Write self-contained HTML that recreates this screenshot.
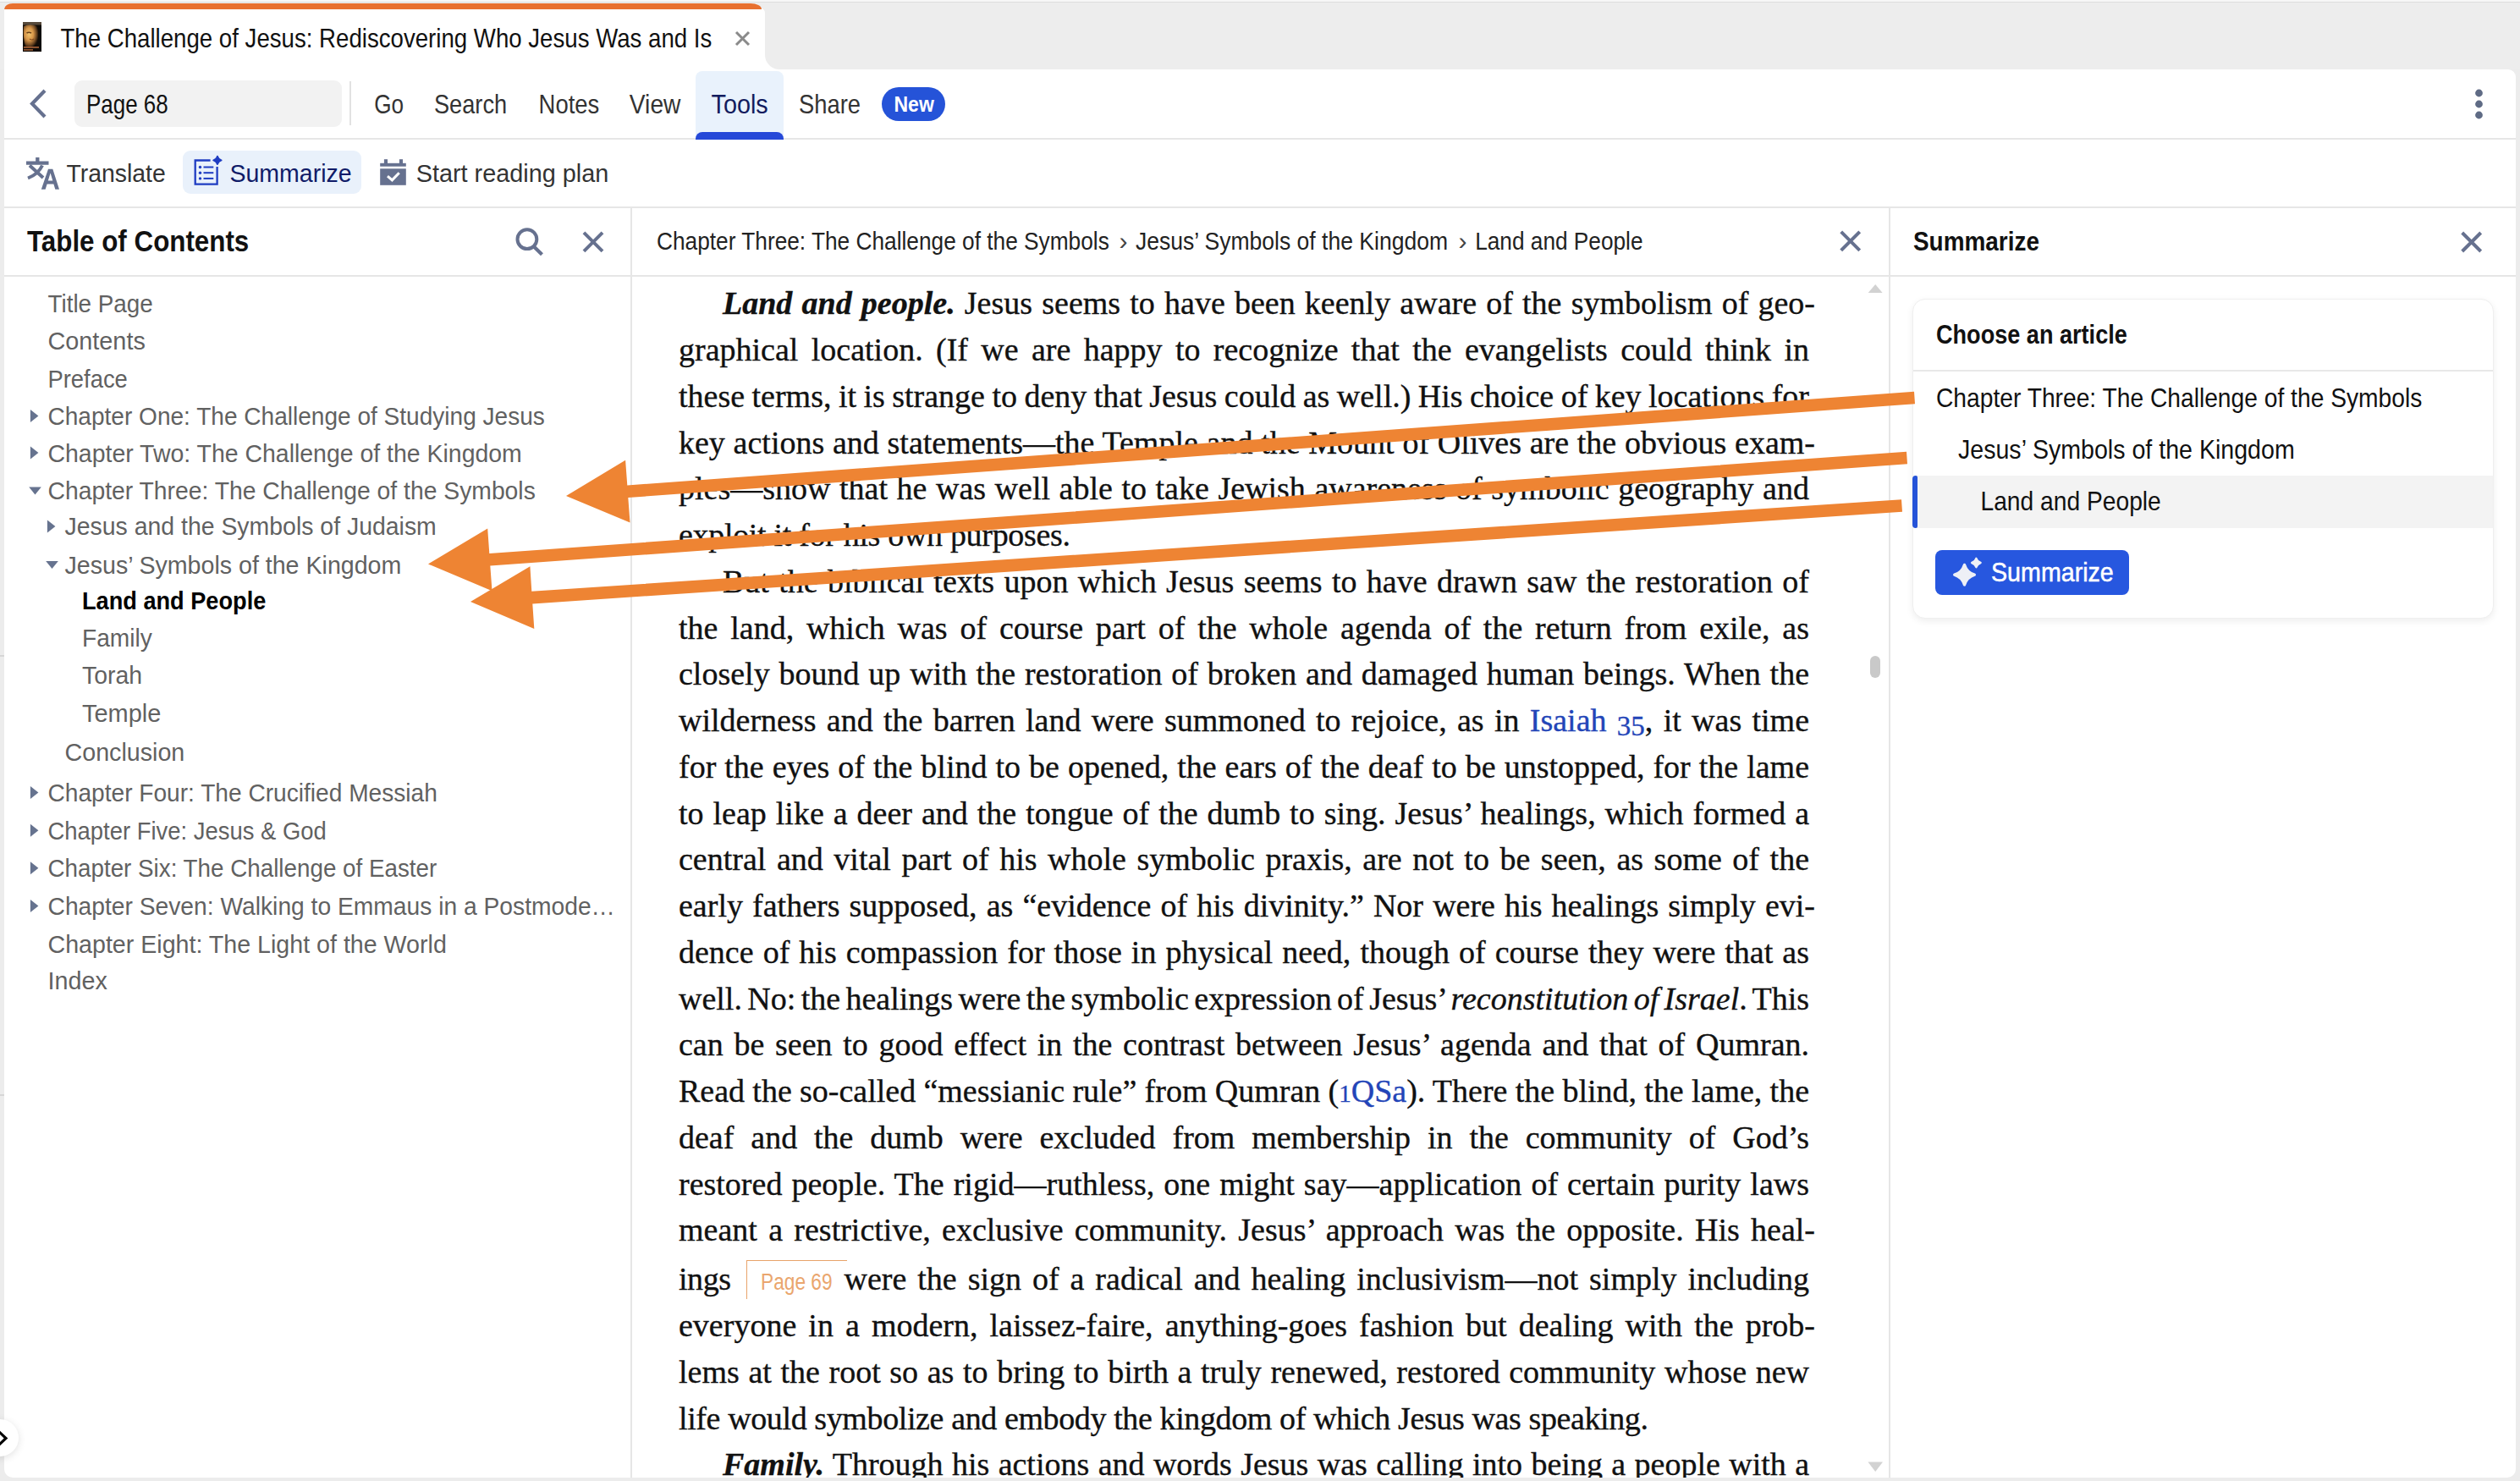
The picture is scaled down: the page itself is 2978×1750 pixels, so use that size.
<!DOCTYPE html>
<html><head><meta charset="utf-8"><title>The Challenge of Jesus</title>
<style>
html,body{margin:0;padding:0;}
body{width:2978px;height:1750px;position:relative;overflow:hidden;background:#ececec;font-family:"Liberation Sans",sans-serif;}
.a{position:absolute;}
</style></head><body>
<div class="a" style="left:0px;top:0px;width:2978px;height:3px;background:#f7f7f7;"></div><div class="a" style="left:0px;top:2px;width:2978px;height:1px;background:#dedede;"></div><div class="a" style="left:0px;top:3px;width:2978px;height:79px;background:#ededed;"></div><div class="a" style="left:5px;top:82px;width:2968px;height:1664px;background:#ffffff;border-radius:0 9px 10px 10px;"></div><div class="a" style="left:900px;top:60px;width:30px;height:22px;background:#ffffff;"></div><div class="a" style="left:904px;top:3px;width:2074px;height:79px;background:#ededed;border-bottom-left-radius:17px;"></div><div class="a" style="left:5px;top:10px;width:899px;height:72px;background:#ffffff;border-top-right-radius:5px;"></div><div class="a" style="left:5px;top:4px;width:895px;height:7px;background:#e8702f;border-top-left-radius:10px 7px;border-top-right-radius:13px 7px;"></div><div class="a" style="left:88px;top:95px;width:316px;height:55px;background:#f2f2f2;border-radius:9px;"></div><div class="a" style="left:413px;top:96px;width:2px;height:52px;background:#e2e2e2;"></div><div class="a" style="left:822px;top:84px;width:104px;height:81px;background:#e9f2fc;border-radius:8px 8px 0 0;"></div><div class="a" style="left:5px;top:163px;width:2968px;height:2px;background:#e6e6e6;"></div><div class="a" style="left:822px;top:156px;width:104px;height:9px;background:#2548d8;border-radius:8px 8px 0 0;"></div><div class="a" style="left:1042px;top:103px;width:75px;height:40px;background:#2553d8;border-radius:20px;"></div><div class="a" style="left:216px;top:178px;width:211px;height:51px;background:#e9f1fb;border-radius:9px;"></div><div class="a" style="left:5px;top:244px;width:2968px;height:2px;background:#e6e6e6;"></div><div class="a" style="left:745px;top:246px;width:2px;height:1500px;background:#e6e6e6;"></div><div class="a" style="left:2232px;top:246px;width:2px;height:1500px;background:#e6e6e6;"></div><div class="a" style="left:5px;top:325px;width:2968px;height:2px;background:#e6e6e6;"></div><div class="a" style="left:2260px;top:353px;width:687px;height:378px;background:#ffffff;border-radius:15px;border:1px solid #efefef;box-sizing:border-box;box-shadow:0 3px 8px rgba(0,0,0,0.07);"></div><div class="a" style="left:2261px;top:437px;width:685px;height:2px;background:#e8e8e8;"></div><div class="a" style="left:2261px;top:562px;width:685px;height:62px;background:#f3f3f3;"></div><div class="a" style="left:2260px;top:562px;width:6px;height:62px;background:#2553d8;border-radius:6px 3px 3px 6px;"></div><div class="a" style="left:2287px;top:650px;width:229px;height:53px;background:#2757df;border-radius:8px;"></div><div class="a" style="left:2210px;top:775px;width:12px;height:26px;background:#c9c9c9;border-radius:6px;"></div><div class="a" style="left:882px;top:1489px;width:1px;height:46px;background:#e8a36a;"></div><div class="a" style="left:882px;top:1489px;width:119px;height:1px;background:#e8a36a;"></div><div class="a" style="left:0px;top:774px;width:5px;height:2px;background:#d6d6d6;"></div><div class="a" style="left:0px;top:1293px;width:5px;height:2px;background:#d6d6d6;"></div><div class="a" style="left:-22px;top:1677px;width:44px;height:44px;background:#ffffff;border-radius:22px;box-shadow:0 2px 10px rgba(0,0,0,0.12);"></div>
<svg class="a" style="left:0;top:0" width="2978" height="1750" viewBox="0 0 2978 1750"><defs><clipPath id="cw"><rect x="5" y="82" width="2968" height="1664"/></clipPath></defs><defs><radialGradient id="fg" cx="0.38" cy="0.42" r="0.62"><stop offset="0" stop-color="#f2c46e"/><stop offset="0.45" stop-color="#d69548"/><stop offset="0.8" stop-color="#6a4420"/><stop offset="1" stop-color="#1a1008"/></radialGradient></defs><rect x="27" y="26" width="22" height="35" fill="#0f0b07"/><path d="M28 31Q36 27 44 31Q47 41 44 51Q38 58 30 55Q27 44 28 31Z" fill="url(#fg)"/><rect x="27" y="26" width="22" height="3.5" fill="#5e5040" opacity="0.9"/><path d="M31.5 39Q34 37.5 37 39" stroke="#6a4018" stroke-width="1.6" fill="none"/><path d="M35 46Q38 48 40 46" stroke="#8a5020" stroke-width="1.2" fill="none"/><rect x="28" y="55" width="18" height="1.8" fill="#c07040" opacity="0.8"/><rect x="28" y="58" width="11" height="1.8" fill="#c07040" opacity="0.7"/><path d="M870 38L885 53M885 38L870 53" stroke="#8a8a8a" stroke-width="3"/><path d="M53 107L38 122.6L53 138" fill="none" stroke="#66718f" stroke-width="4.2"/><circle cx="2929.5" cy="110" r="4.4" fill="#5f6b85"/><circle cx="2929.5" cy="123" r="4.4" fill="#5f6b85"/><circle cx="2929.5" cy="136" r="4.4" fill="#5f6b85"/><path d="M31 192.7H57.5M44.3 186V192.7" stroke="#66718f" stroke-width="4.3" fill="none"/><path d="M35 195.5L51 210M50 195.5Q45 206 33 210.5" stroke="#66718f" stroke-width="4" fill="none"/><path d="M48.8 223.8L57 199.7H62.3L70 223.8H65.3L63.4 217.4H55.6L53.6 223.8ZM56.8 213.6H62.3L59.6 204.5Z" fill="#66718f"/><path d="M248.6 189.5H230.7V217.7H256.6V197" fill="none" stroke="#1f3dc2" stroke-width="2.3"/><circle cx="236.5" cy="197.5" r="1.7" fill="#1f3dc2"/><path d="M240.5 197.5H252.3" stroke="#1f3dc2" stroke-width="2"/><circle cx="236.5" cy="204.2" r="1.7" fill="#1f3dc2"/><path d="M240.5 204.2H252.3" stroke="#1f3dc2" stroke-width="2"/><circle cx="236.5" cy="210.9" r="1.7" fill="#1f3dc2"/><path d="M240.5 210.9H252.3" stroke="#1f3dc2" stroke-width="2"/><path d="M256.9 184.8Q258.00399999999996 188.296 261.5 189.4Q258.00399999999996 190.50400000000002 256.9 194.0Q255.79599999999996 190.50400000000002 252.29999999999998 189.4Q255.79599999999996 188.296 256.9 184.8Z" fill="#1f3dc2" stroke="#1f3dc2" stroke-width="2" stroke-linejoin="round"/><rect x="453.9" y="188.2" width="4.1" height="5" fill="#66718f"/><rect x="471.9" y="188.2" width="4.1" height="5" fill="#66718f"/><rect x="449.2" y="192.8" width="30.6" height="3.9" fill="#66718f"/><rect x="449.2" y="199.3" width="30.6" height="19.5" fill="#66718f"/><path d="M458 208.2L463.4 212.9L471.7 204.2" fill="none" stroke="#fff" stroke-width="3"/><circle cx="622.9" cy="282.7" r="11.4" fill="none" stroke="#66718f" stroke-width="4"/><path d="M631 291.5L640.5 300.8" stroke="#66718f" stroke-width="4.2"/><path d="M690 274.8L712 296.8M712 274.8L690 296.8" stroke="#66718f" stroke-width="4"/><path d="M2175.7 273.9L2197.7 295.9M2197.7 273.9L2175.7 295.9" stroke="#66718f" stroke-width="4"/><path d="M2909.7 275L2931.7 297M2931.7 275L2909.7 297" stroke="#66718f" stroke-width="4"/><path d="M2207.7 346L2216.2 336L2224.6 346Z" fill="#d2d2d2"/><path d="M2207.5 1727.6L2225 1727.6L2216.2 1739Z" fill="#d2d2d2"/><path d="M2321.5 667.4000000000001Q2324.332 676.368 2333.3 679.2Q2324.332 682.032 2321.5 691.0Q2318.668 682.032 2309.7 679.2Q2318.668 676.368 2321.5 667.4000000000001Z" fill="#eef0f6" stroke="#eef0f6" stroke-width="3.4" stroke-linejoin="round"/><path d="M2335.4 659.8Q2336.648 663.752 2340.6 665Q2336.648 666.248 2335.4 670.2Q2334.152 666.248 2330.2000000000003 665Q2334.152 663.752 2335.4 659.8Z" fill="#eef0f6" stroke="#eef0f6" stroke-width="2.4" stroke-linejoin="round"/><path d="M-2 1691L7 1699.5L-2 1708" fill="none" stroke="#000" stroke-width="3.2"/><path d="M35.9 484.0L45.4 491.5L35.9 499.0Z" fill="#66738f"/><path d="M35.9 527.5L45.4 535.0L35.9 542.5Z" fill="#66738f"/><path d="M34.2 575.6L48.8 575.6L41.5 584.6Z" fill="#66738f"/><path d="M55.9 614.4L65.4 621.9L55.9 629.4Z" fill="#66738f"/><path d="M54.2 663.1L68.8 663.1L61.5 672.1Z" fill="#66738f"/><path d="M35.9 929.0L45.4 936.5L35.9 944.0Z" fill="#66738f"/><path d="M35.9 973.7L45.4 981.2L35.9 988.7Z" fill="#66738f"/><path d="M35.9 1018.3L45.4 1025.8L35.9 1033.3Z" fill="#66738f"/><path d="M35.9 1063.0L45.4 1070.5L35.9 1078.0Z" fill="#66738f"/><text id="t0" x="71.5" y="55.5" fill="#111" style="font-family:'Liberation Sans', sans-serif;font-size:32px;font-weight:400;font-style:normal;"  textLength="769.8" lengthAdjust="spacingAndGlyphs">The Challenge of Jesus: Rediscovering Who Jesus Was and Is</text><text id="t1" x="102" y="134" fill="#111" style="font-family:'Liberation Sans', sans-serif;font-size:30.5px;font-weight:400;font-style:normal;"  textLength="96.7" lengthAdjust="spacingAndGlyphs">Page 68</text><text id="t2" x="442.3" y="133.6" fill="#333" style="font-family:'Liberation Sans', sans-serif;font-size:30.5px;font-weight:400;font-style:normal;"  textLength="34.8" lengthAdjust="spacingAndGlyphs">Go</text><text id="t3" x="513" y="133.6" fill="#333" style="font-family:'Liberation Sans', sans-serif;font-size:30.5px;font-weight:400;font-style:normal;"  textLength="86.1" lengthAdjust="spacingAndGlyphs">Search</text><text id="t4" x="636.6" y="133.6" fill="#333" style="font-family:'Liberation Sans', sans-serif;font-size:30.5px;font-weight:400;font-style:normal;"  textLength="71.7" lengthAdjust="spacingAndGlyphs">Notes</text><text id="t5" x="743.8" y="133.6" fill="#333" style="font-family:'Liberation Sans', sans-serif;font-size:30.5px;font-weight:400;font-style:normal;"  textLength="60.7" lengthAdjust="spacingAndGlyphs">View</text><text id="t6" x="840.5" y="133.6" fill="#121c5e" style="font-family:'Liberation Sans', sans-serif;font-size:30.5px;font-weight:400;font-style:normal;"  textLength="67.2" lengthAdjust="spacingAndGlyphs">Tools</text><text id="t7" x="944" y="133.6" fill="#333" style="font-family:'Liberation Sans', sans-serif;font-size:30.5px;font-weight:400;font-style:normal;"  textLength="73.0" lengthAdjust="spacingAndGlyphs">Share</text><text id="t8" x="1056.5" y="132.2" fill="#ffffff" style="font-family:'Liberation Sans', sans-serif;font-size:26px;font-weight:700;font-style:normal;"  textLength="47.3" lengthAdjust="spacingAndGlyphs">New</text><text id="t9" x="78.4" y="215.2" fill="#333" style="font-family:'Liberation Sans', sans-serif;font-size:29.5px;font-weight:400;font-style:normal;"  textLength="117.3" lengthAdjust="spacingAndGlyphs">Translate</text><text id="t10" x="271.4" y="215.2" fill="#101b68" style="font-family:'Liberation Sans', sans-serif;font-size:29.5px;font-weight:400;font-style:normal;"  textLength="144.2" lengthAdjust="spacingAndGlyphs">Summarize</text><text id="t11" x="491.7" y="215.2" fill="#333" style="font-family:'Liberation Sans', sans-serif;font-size:29.5px;font-weight:400;font-style:normal;"  textLength="227.6" lengthAdjust="spacingAndGlyphs">Start reading plan</text><text id="t12" x="32" y="297" fill="#111" style="font-family:'Liberation Sans', sans-serif;font-size:34.5px;font-weight:700;font-style:normal;"  textLength="262.3" lengthAdjust="spacingAndGlyphs">Table of Contents</text><text id="t13" x="776" y="295.4" fill="#222" style="font-family:'Liberation Sans', sans-serif;font-size:30px;font-weight:400;font-style:normal;"  textLength="534.8" lengthAdjust="spacingAndGlyphs">Chapter Three: The Challenge of the Symbols</text><text id="t14" x="1322.5" y="295.4" fill="#444" style="font-family:'Liberation Sans', sans-serif;font-size:30px;font-weight:400;font-style:normal;" >›</text><text id="t15" x="1341.9" y="295.4" fill="#222" style="font-family:'Liberation Sans', sans-serif;font-size:30px;font-weight:400;font-style:normal;"  textLength="369.1" lengthAdjust="spacingAndGlyphs">Jesus’ Symbols of the Kingdom</text><text id="t16" x="1723.5" y="295.4" fill="#444" style="font-family:'Liberation Sans', sans-serif;font-size:30px;font-weight:400;font-style:normal;" >›</text><text id="t17" x="1743.2" y="295.4" fill="#222" style="font-family:'Liberation Sans', sans-serif;font-size:30px;font-weight:400;font-style:normal;"  textLength="198.3" lengthAdjust="spacingAndGlyphs">Land and People</text><text id="t18" x="2261" y="296" fill="#111" style="font-family:'Liberation Sans', sans-serif;font-size:30.5px;font-weight:700;font-style:normal;"  textLength="148.9" lengthAdjust="spacingAndGlyphs">Summarize</text><text id="t19" x="56.5" y="368.6" fill="#616161" style="font-family:'Liberation Sans', sans-serif;font-size:30px;font-weight:400;font-style:normal;"  textLength="124.3" lengthAdjust="spacingAndGlyphs">Title Page</text><text id="t20" x="56.5" y="413" fill="#616161" style="font-family:'Liberation Sans', sans-serif;font-size:30px;font-weight:400;font-style:normal;"  textLength="115.3" lengthAdjust="spacingAndGlyphs">Contents</text><text id="t21" x="56.5" y="457.5" fill="#616161" style="font-family:'Liberation Sans', sans-serif;font-size:30px;font-weight:400;font-style:normal;"  textLength="94.3" lengthAdjust="spacingAndGlyphs">Preface</text><text id="t22" x="56.5" y="502" fill="#616161" style="font-family:'Liberation Sans', sans-serif;font-size:30px;font-weight:400;font-style:normal;"  textLength="587.3" lengthAdjust="spacingAndGlyphs">Chapter One: The Challenge of Studying Jesus</text><text id="t23" x="56.5" y="545.5" fill="#616161" style="font-family:'Liberation Sans', sans-serif;font-size:30px;font-weight:400;font-style:normal;"  textLength="560.3" lengthAdjust="spacingAndGlyphs">Chapter Two: The Challenge of the Kingdom</text><text id="t24" x="56.5" y="590" fill="#616161" style="font-family:'Liberation Sans', sans-serif;font-size:30px;font-weight:400;font-style:normal;"  textLength="576.3" lengthAdjust="spacingAndGlyphs">Chapter Three: The Challenge of the Symbols</text><text id="t25" x="76.5" y="632.4" fill="#616161" style="font-family:'Liberation Sans', sans-serif;font-size:30px;font-weight:400;font-style:normal;"  textLength="439.3" lengthAdjust="spacingAndGlyphs">Jesus and the Symbols of Judaism</text><text id="t26" x="76.5" y="677.5" fill="#616161" style="font-family:'Liberation Sans', sans-serif;font-size:30px;font-weight:400;font-style:normal;"  textLength="397.8" lengthAdjust="spacingAndGlyphs">Jesus’ Symbols of the Kingdom</text><text id="t27" x="97" y="719.7" fill="#000" style="font-family:'Liberation Sans', sans-serif;font-size:30px;font-weight:700;font-style:normal;"  textLength="217.3" lengthAdjust="spacingAndGlyphs">Land and People</text><text id="t28" x="97" y="764.3" fill="#616161" style="font-family:'Liberation Sans', sans-serif;font-size:30px;font-weight:400;font-style:normal;"  textLength="82.8" lengthAdjust="spacingAndGlyphs">Family</text><text id="t29" x="97" y="808.3" fill="#616161" style="font-family:'Liberation Sans', sans-serif;font-size:30px;font-weight:400;font-style:normal;"  textLength="71.0" lengthAdjust="spacingAndGlyphs">Torah</text><text id="t30" x="97" y="853.3" fill="#616161" style="font-family:'Liberation Sans', sans-serif;font-size:30px;font-weight:400;font-style:normal;"  textLength="93.3" lengthAdjust="spacingAndGlyphs">Temple</text><text id="t31" x="76.5" y="899.3" fill="#616161" style="font-family:'Liberation Sans', sans-serif;font-size:30px;font-weight:400;font-style:normal;"  textLength="141.8" lengthAdjust="spacingAndGlyphs">Conclusion</text><text id="t32" x="56.5" y="947" fill="#616161" style="font-family:'Liberation Sans', sans-serif;font-size:30px;font-weight:400;font-style:normal;"  textLength="460.3" lengthAdjust="spacingAndGlyphs">Chapter Four: The Crucified Messiah</text><text id="t33" x="56.5" y="991.7" fill="#616161" style="font-family:'Liberation Sans', sans-serif;font-size:30px;font-weight:400;font-style:normal;"  textLength="329.3" lengthAdjust="spacingAndGlyphs">Chapter Five: Jesus &amp; God</text><text id="t34" x="56.5" y="1036.3" fill="#616161" style="font-family:'Liberation Sans', sans-serif;font-size:30px;font-weight:400;font-style:normal;"  textLength="459.8" lengthAdjust="spacingAndGlyphs">Chapter Six: The Challenge of Easter</text><text id="t35" x="56.5" y="1081" fill="#616161" style="font-family:'Liberation Sans', sans-serif;font-size:30px;font-weight:400;font-style:normal;"  textLength="670.3" lengthAdjust="spacingAndGlyphs">Chapter Seven: Walking to Emmaus in a Postmode…</text><text id="t36" x="56.5" y="1125.6" fill="#616161" style="font-family:'Liberation Sans', sans-serif;font-size:30px;font-weight:400;font-style:normal;"  textLength="471.3" lengthAdjust="spacingAndGlyphs">Chapter Eight: The Light of the World</text><text id="t37" x="56.5" y="1169.3" fill="#616161" style="font-family:'Liberation Sans', sans-serif;font-size:30px;font-weight:400;font-style:normal;"  textLength="70.3" lengthAdjust="spacingAndGlyphs">Index</text><text id="t38" x="2288" y="405.7" fill="#111" style="font-family:'Liberation Sans', sans-serif;font-size:31px;font-weight:700;font-style:normal;"  textLength="225.8" lengthAdjust="spacingAndGlyphs">Choose an article</text><text id="t39" x="2288" y="480.5" fill="#111" style="font-family:'Liberation Sans', sans-serif;font-size:30.5px;font-weight:400;font-style:normal;"  textLength="574.3" lengthAdjust="spacingAndGlyphs">Chapter Three: The Challenge of the Symbols</text><text id="t40" x="2314" y="542" fill="#111" style="font-family:'Liberation Sans', sans-serif;font-size:30.5px;font-weight:400;font-style:normal;"  textLength="397.7" lengthAdjust="spacingAndGlyphs">Jesus’ Symbols of the Kingdom</text><text id="t41" x="2340.5" y="602.5" fill="#111" style="font-family:'Liberation Sans', sans-serif;font-size:30.5px;font-weight:400;font-style:normal;"  textLength="213.3" lengthAdjust="spacingAndGlyphs">Land and People</text><text id="t42" x="2353" y="686.6" fill="#ffffff" style="font-family:'Liberation Sans', sans-serif;font-size:30.5px;font-weight:400;font-style:normal;" stroke="#fff" stroke-width="0.5" textLength="144.8" lengthAdjust="spacingAndGlyphs">Summarize</text><text id="t43" x="899" y="1523.8" fill="#eaa66e" style="font-family:'Liberation Sans', sans-serif;font-size:27px;font-weight:400;font-style:normal;"  textLength="84.6" lengthAdjust="spacingAndGlyphs">Page 69</text><g clip-path="url(#cw)"><text id="t44" x="854" y="371.2" fill="#111" style="font-family:'Liberation Serif', serif;font-size:38px;font-weight:400;font-style:normal;word-spacing:1.682px;" stroke="#111" stroke-width="0.35"><tspan style="font-weight:700;font-style:italic">Land and people.</tspan> Jesus seems to have been keenly aware of the symbolism of geo-</text><text id="t45" x="802" y="426.0" fill="#111" style="font-family:'Liberation Serif', serif;font-size:38px;font-weight:400;font-style:normal;word-spacing:5.855px;" stroke="#111" stroke-width="0.35">graphical location. (If we are happy to recognize that the evangelists could think in</text><text id="t46" x="802" y="480.7" fill="#111" style="font-family:'Liberation Serif', serif;font-size:38px;font-weight:400;font-style:normal;word-spacing:-1.057px;" stroke="#111" stroke-width="0.35">these terms, it is strange to deny that Jesus could as well.) His choice of key locations for</text><text id="t47" x="802" y="535.5" fill="#111" style="font-family:'Liberation Serif', serif;font-size:38px;font-weight:400;font-style:normal;word-spacing:0.228px;" stroke="#111" stroke-width="0.35">key actions and statements—the Temple and the Mount of Olives are the obvious exam-</text><text id="t48" x="802" y="590.2" fill="#111" style="font-family:'Liberation Serif', serif;font-size:38px;font-weight:400;font-style:normal;word-spacing:1.056px;" stroke="#111" stroke-width="0.35">ples—show that he was well able to take Jewish awareness of symbolic geography and</text><text id="t49" x="802" y="645.0" fill="#111" style="font-family:'Liberation Serif', serif;font-size:38px;font-weight:400;font-style:normal;letter-spacing:-0.318px;" stroke="#111" stroke-width="0.35">exploit it for his own purposes.</text><text id="t50" x="854" y="699.8" fill="#111" style="font-family:'Liberation Serif', serif;font-size:38px;font-weight:400;font-style:normal;word-spacing:1.860px;" stroke="#111" stroke-width="0.35">But the biblical texts upon which Jesus seems to have drawn saw the restoration of</text><text id="t51" x="802" y="754.5" fill="#111" style="font-family:'Liberation Serif', serif;font-size:38px;font-weight:400;font-style:normal;word-spacing:5.284px;" stroke="#111" stroke-width="0.35">the land, which was of course part of the whole agenda of the return from exile, as</text><text id="t52" x="802" y="809.3" fill="#111" style="font-family:'Liberation Serif', serif;font-size:38px;font-weight:400;font-style:normal;word-spacing:1.352px;" stroke="#111" stroke-width="0.35">closely bound up with the restoration of broken and damaged human beings. When the</text><text id="t53" x="802" y="864.0" fill="#111" style="font-family:'Liberation Serif', serif;font-size:38px;font-weight:400;font-style:normal;word-spacing:2.799px;" stroke="#111" stroke-width="0.35">wilderness and the barren land were summoned to rejoice, as in <tspan fill="#2345b8" stroke="#2345b8">Isaiah </tspan><tspan fill="#2345b8" stroke="#2345b8" style="font-size:33px" dy="5">35</tspan><tspan dy="-5">, it was time</tspan></text><text id="t54" x="802" y="918.8" fill="#111" style="font-family:'Liberation Serif', serif;font-size:38px;font-weight:400;font-style:normal;word-spacing:0.506px;" stroke="#111" stroke-width="0.35">for the eyes of the blind to be opened, the ears of the deaf to be unstopped, for the lame</text><text id="t55" x="802" y="973.6" fill="#111" style="font-family:'Liberation Serif', serif;font-size:38px;font-weight:400;font-style:normal;word-spacing:1.471px;" stroke="#111" stroke-width="0.35">to leap like a deer and the tongue of the dumb to sing. Jesus’ healings, which formed a</text><text id="t56" x="802" y="1028.3" fill="#111" style="font-family:'Liberation Serif', serif;font-size:38px;font-weight:400;font-style:normal;word-spacing:3.044px;" stroke="#111" stroke-width="0.35">central and vital part of his whole symbolic praxis, are not to be seen, as some of the</text><text id="t57" x="802" y="1083.1" fill="#111" style="font-family:'Liberation Serif', serif;font-size:38px;font-weight:400;font-style:normal;word-spacing:1.623px;" stroke="#111" stroke-width="0.35">early fathers supposed, as “evidence of his divinity.” Nor were his healings simply evi-</text><text id="t58" x="802" y="1137.8" fill="#111" style="font-family:'Liberation Serif', serif;font-size:38px;font-weight:400;font-style:normal;word-spacing:1.550px;" stroke="#111" stroke-width="0.35">dence of his compassion for those in physical need, though of course they were that as</text><text id="t59" x="802" y="1192.6" fill="#111" style="font-family:'Liberation Serif', serif;font-size:38px;font-weight:400;font-style:normal;word-spacing:-3.123px;" stroke="#111" stroke-width="0.35">well. No: the healings were the symbolic expression of Jesus’ <tspan style="font-style:italic">reconstitution of Israel</tspan>. This</text><text id="t60" x="802" y="1247.4" fill="#111" style="font-family:'Liberation Serif', serif;font-size:38px;font-weight:400;font-style:normal;word-spacing:3.199px;" stroke="#111" stroke-width="0.35">can be seen to good effect in the contrast between Jesus’ agenda and that of Qumran.</text><text id="t61" x="802" y="1302.1" fill="#111" style="font-family:'Liberation Serif', serif;font-size:38px;font-weight:400;font-style:normal;word-spacing:-0.240px;" stroke="#111" stroke-width="0.35">Read the so-called “messianic rule” from Qumran (<tspan fill="#2345b8" stroke="#2345b8" style="font-size:29px">1</tspan><tspan fill="#2345b8" stroke="#2345b8">QSa</tspan>). There the blind, the lame, the</text><text id="t62" x="802" y="1356.9" fill="#111" style="font-family:'Liberation Serif', serif;font-size:38px;font-weight:400;font-style:normal;word-spacing:10.378px;" stroke="#111" stroke-width="0.35">deaf and the dumb were excluded from membership in the community of God’s</text><text id="t63" x="802" y="1411.6" fill="#111" style="font-family:'Liberation Serif', serif;font-size:38px;font-weight:400;font-style:normal;word-spacing:1.547px;" stroke="#111" stroke-width="0.35">restored people. The rigid—ruthless, one might say—application of certain purity laws</text><text id="t64" x="802" y="1466.4" fill="#111" style="font-family:'Liberation Serif', serif;font-size:38px;font-weight:400;font-style:normal;word-spacing:3.807px;" stroke="#111" stroke-width="0.35">meant a restrictive, exclusive community. Jesus’ approach was the opposite. His heal-</text><text id="t65" x="802" y="1524.2" fill="#111" style="font-family:'Liberation Serif', serif;font-size:38px;font-weight:400;font-style:normal;letter-spacing:-0.453px;" stroke="#111" stroke-width="0.35">ings</text><text id="t66" x="997.5" y="1524.2" fill="#111" style="font-family:'Liberation Serif', serif;font-size:38px;font-weight:400;font-style:normal;word-spacing:3.450px;" stroke="#111" stroke-width="0.35">were the sign of a radical and healing inclusivism—not simply including</text><text id="t67" x="802" y="1579.0" fill="#111" style="font-family:'Liberation Serif', serif;font-size:38px;font-weight:400;font-style:normal;word-spacing:4.577px;" stroke="#111" stroke-width="0.35">everyone in a modern, laissez-faire, anything-goes fashion but dealing with the prob-</text><text id="t68" x="802" y="1633.7" fill="#111" style="font-family:'Liberation Serif', serif;font-size:38px;font-weight:400;font-style:normal;word-spacing:1.119px;" stroke="#111" stroke-width="0.35">lems at the root so as to bring to birth a truly renewed, restored community whose new</text><text id="t69" x="802" y="1688.5" fill="#111" style="font-family:'Liberation Serif', serif;font-size:38px;font-weight:400;font-style:normal;letter-spacing:-0.389px;" stroke="#111" stroke-width="0.35">life would symbolize and embody the kingdom of which Jesus was speaking.</text><text id="t70" x="854" y="1743.2" fill="#111" style="font-family:'Liberation Serif', serif;font-size:38px;font-weight:400;font-style:normal;word-spacing:0.875px;" stroke="#111" stroke-width="0.35"><tspan style="font-weight:700;font-style:italic">Family.</tspan> Through his actions and words Jesus was calling into being a people with a</text></g><path d="M669.0 586.0L744.5 617.6L742.3 588.0L2263.0 477.3L2262.0 462.7L741.3 573.4L739.1 543.8Z" fill="#ee8433"/><path d="M506.0 666.5L581.5 698.2L579.3 668.6L2254.0 548.3L2253.0 533.7L578.3 654.0L576.2 624.4Z" fill="#ee8433"/><path d="M556.0 711.0L631.3 743.0L629.3 713.4L2248.0 604.8L2247.0 590.2L628.3 698.8L626.4 669.2Z" fill="#ee8433"/></svg>
</body></html>
